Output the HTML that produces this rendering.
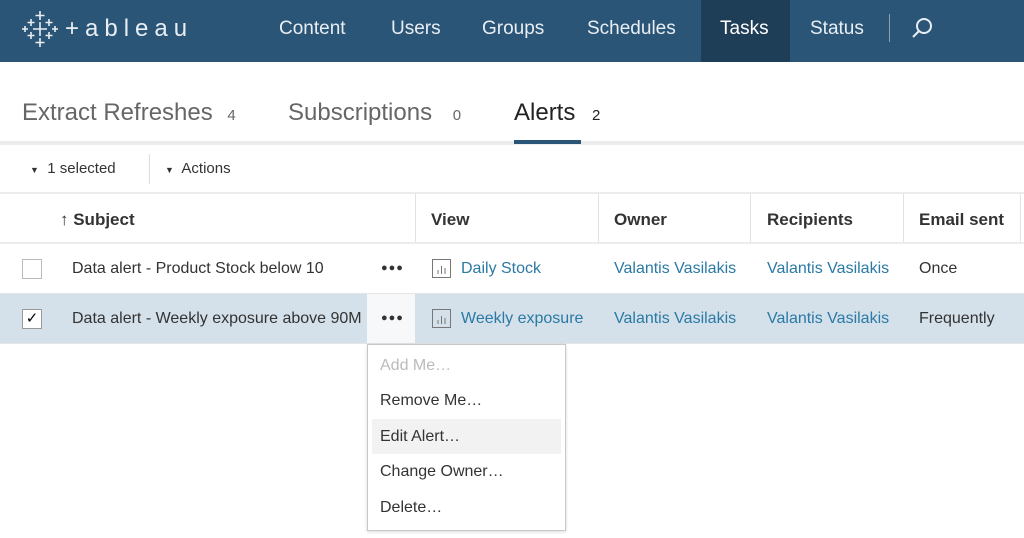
<!DOCTYPE html><html><head><style>
body{margin:0;width:1024px;height:538px;overflow:hidden;font-family:"Liberation Sans",sans-serif;background:#fff;position:relative}
.a{position:absolute}
.nav{left:0;top:0;width:1024px;height:62px;background:#2b5576}
.ni{color:#e8eef3;font-size:19px;top:18px}
.t{color:#333;font-size:16px}
.l{color:#2a7aa5;font-size:16px}
.h{font-weight:bold;font-size:17px;color:#333;top:210px}
.vl{width:1px;background:#e2e2e2;top:194px;height:49px}
.m{left:380px;font-size:16px;color:#333}
.d{left:381px;font-size:11px;color:#333;letter-spacing:1px}
</style></head><body>
<div class="a nav"></div>
<svg class="a" style="left:22px;top:9px" width="40" height="40" stroke="#e8eef3" stroke-width="1.6">
<path d="M18 2v9M13.5 6.5h9M18 29v9M13.5 33.5h9M9 10v7M5.5 13.5h7M27 10v7M23.5 13.5h7M9 23v7M5.5 26.5h7M27 23v7M23.5 26.5h7M18 13v14M11 20h14M3 17v6M0 20h6M33 17v6M30 20h6"/></svg>
<div class="a" style="left:65px;top:15px;color:#e8eef3;font-size:24px;letter-spacing:6px">+ableau</div>
<div class="a ni" style="left:279px">Content</div>
<div class="a ni" style="left:391px">Users</div>
<div class="a ni" style="left:482px">Groups</div>
<div class="a ni" style="left:587px">Schedules</div>
<div class="a" style="left:701px;top:0;width:89px;height:62px;background:#1e3d56"></div>
<div class="a ni" style="left:720px;color:#fff">Tasks</div>
<div class="a ni" style="left:810px">Status</div>
<div class="a" style="left:889px;top:14px;width:1px;height:28px;background:#8aa3b8"></div>
<svg class="a" style="left:910px;top:16px" width="26" height="26" fill="none" stroke="#e8eef3" stroke-width="2"><circle cx="14" cy="10" r="7"/><path d="M9 15l-6 6"/></svg>
<div class="a" style="left:22px;top:99px;font-size:24px;color:#666">Extract Refreshes <span style="font-size:15px;margin-left:8px">4</span></div>
<div class="a" style="left:288px;top:99px;font-size:24px;color:#666">Subscriptions <span style="font-size:15px;margin-left:14px">0</span></div>
<div class="a" style="left:514px;top:99px;font-size:24px;color:#222">Alerts <span style="font-size:15px;margin-left:10px">2</span></div>
<div class="a" style="left:0;top:141px;width:1024px;height:4px;background:#ececec"></div>
<div class="a" style="left:514px;top:140px;width:67px;height:4px;background:#2b5576"></div>
<div class="a t" style="left:30px;top:160px;font-size:15px"><span style="font-size:9px">▼</span>&nbsp; 1 selected</div>
<div class="a" style="left:149px;top:154px;width:1px;height:30px;background:#ddd"></div>
<div class="a t" style="left:165px;top:160px;font-size:15px"><span style="font-size:9px">▼</span>&nbsp; Actions</div>
<div class="a" style="left:0;top:192px;width:1024px;height:2px;background:#ececec"></div>
<div class="a h" style="left:60px">↑ Subject</div>
<div class="a h" style="left:431px">View</div>
<div class="a h" style="left:614px">Owner</div>
<div class="a h" style="left:767px">Recipients</div>
<div class="a h" style="left:919px">Email sent</div>
<div class="a vl" style="left:415px"></div><div class="a vl" style="left:598px"></div><div class="a vl" style="left:750px"></div><div class="a vl" style="left:903px"></div><div class="a vl" style="left:1020px"></div>
<div class="a" style="left:0;top:242px;width:1024px;height:2px;background:#ececec"></div>
<div class="a" style="left:22px;top:259px;width:18px;height:18px;border:1px solid #bbb;background:#fff"></div>
<div class="a t" style="left:72px;top:260px">Data alert - Product Stock below 10</div>
<div class="a d" style="top:262px">●●●</div>
<svg class="a" style="left:432px;top:259px" width="20" height="20" fill="none" stroke="#777"><rect x=".5" y=".5" width="18" height="18"/><path d="M6 15v-4M9.5 15v-8M13 15v-6"/></svg>
<div class="a l" style="left:461px;top:260px">Daily Stock</div>
<div class="a l" style="left:614px;top:260px">Valantis Vasilakis</div>
<div class="a l" style="left:767px;top:260px">Valantis Vasilakis</div>
<div class="a t" style="left:919px;top:260px">Once</div>
<div class="a" style="left:0;top:293px;width:1024px;height:1px;background:#e5e5e5"></div>
<div class="a" style="left:0;top:294px;width:1024px;height:49px;background:#d4e0ea"></div>
<div class="a" style="left:367px;top:294px;width:48px;height:50px;background:#f6f8fa"></div>
<div class="a" style="left:22px;top:309px;width:18px;height:18px;border:1px solid #999;background:#fff;font-size:15px;text-align:center;line-height:18px">✓</div>
<div class="a t" style="left:72px;top:310px">Data alert - Weekly exposure above 90M</div>
<div class="a d" style="top:312px">●●●</div>
<svg class="a" style="left:432px;top:309px" width="20" height="20" fill="none" stroke="#777"><rect x=".5" y=".5" width="18" height="18"/><path d="M6 15v-4M9.5 15v-8M13 15v-6"/></svg>
<div class="a l" style="left:461px;top:310px">Weekly exposure</div>
<div class="a l" style="left:614px;top:310px">Valantis Vasilakis</div>
<div class="a l" style="left:767px;top:310px">Valantis Vasilakis</div>
<div class="a t" style="left:919px;top:310px">Frequently</div>
<div class="a" style="left:0;top:343px;width:1024px;height:1px;background:#e5e5e5"></div>
<div class="a" style="left:367px;top:344px;width:197px;height:185px;border:1px solid #c8c8c8;background:#fff;box-shadow:0 1px 3px rgba(0,0,0,.15)"></div>
<div class="a" style="left:372px;top:419px;width:189px;height:35px;background:#f2f2f2"></div>
<div class="a m" style="top:357px;color:#bbb">Add Me…</div>
<div class="a m" style="top:392px">Remove Me…</div>
<div class="a m" style="top:428px">Edit Alert…</div>
<div class="a m" style="top:463px">Change Owner…</div>
<div class="a m" style="top:499px">Delete…</div>
</body></html>
